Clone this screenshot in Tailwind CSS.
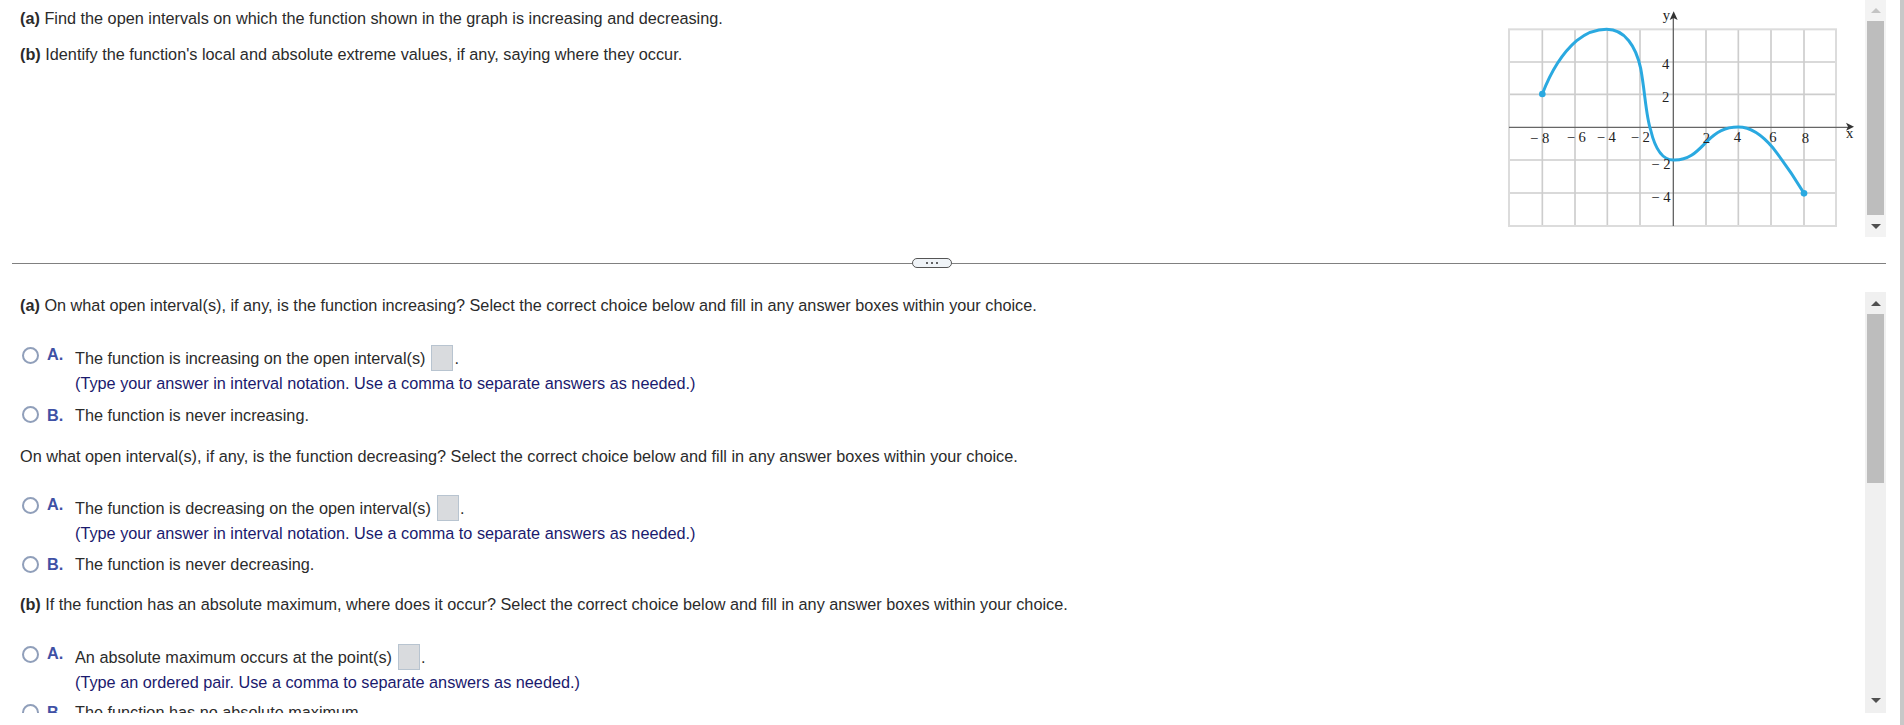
<!DOCTYPE html>
<html lang="en">
  <head>
    <meta charset="UTF-8" />
    <meta name="viewport" content="width=device-width, initial-scale=1.0" />
    <script src="https://cdn.jsdelivr.net/npm/@tailwindcss/browser@4"></script>
    <title>Function intervals</title>
  </head>
  <body class="bg-white h-[725px] overflow-hidden flex font-['Liberation_Sans',Arial,sans-serif] text-[16.25px] leading-[24px] text-[#2b2b2b]">
    <div class="w-[1886px] flex flex-col">
      <!-- question panel -->
      <section class="h-[238px] flex">
        <div class="w-[1490px] pl-5 pt-[6px]">
          <p><b>(a)</b> Find the open intervals on which the function shown in the graph is increasing and decreasing.</p>
          <p class="mt-3"><b>(b)</b> Identify the function's local and absolute extreme values, if any, saying where they occur.</p>
        </div>
        <svg class="w-[375px] h-[238px] shrink-0" viewBox="0 0 1125 714" fill="none">
          <g stroke="#cdcdcd" stroke-width="5">
            <path d="M157 88V678M255 88V678M352 88V678M450 88V678M648 88V678M745 88V678M843 88V678M942 88V678" />
            <path d="M57 186H1038M57 283H1038M57 480H1038M57 579H1038" />
          </g>
          <rect x="57" y="88" width="981" height="590" stroke="#dcdcdc" stroke-width="6" />
          <path d="M57 382H1082M550 678V50" stroke="#666" stroke-width="4" />
          <path d="M1092 380L1068 368L1074 380L1068 392Z" fill="#333" />
          <path d="M551 34L539 60L551 54L563 60Z" fill="#333" />
          <path d="M157 282C175 235 210 165 260 122C290 98 325 88 350 88C405 88 438 140 452 205C465 275 468 350 482 390C495 445 515 480 550 480C600 482 625 450 650 425C680 395 705 381 745 381C790 381 825 415 850 445C885 490 915 535 942 580" stroke="#2aa9e0" stroke-width="9" stroke-linecap="round" />
          <circle cx="157" cy="282" r="10" fill="#2aa9e0" />
          <circle cx="942" cy="580" r="10" fill="#2aa9e0" />
          <g fill="#222" font-family="'Liberation Serif', serif" font-size="44">
            <text x="120" y="430">− 8</text>
            <text x="230" y="426">− 6</text>
            <text x="320" y="426">− 4</text>
            <text x="422" y="426">− 2</text>
            <text x="638" y="430">2</text>
            <text x="731" y="426">4</text>
            <text x="838" y="426">6</text>
            <text x="935" y="430">8</text>
            <text x="516" y="206">4</text>
            <text x="516" y="306">2</text>
            <text x="484" y="506">− 2</text>
            <text x="484" y="606">− 4</text>
            <text x="1068" y="414">x</text>
            <text x="518" y="60">y</text>
          </g>
        </svg>
        <div class="w-[21px] h-[237px] bg-[#f3f3f3] flex flex-col items-center shrink-0">
          <div class="h-[21px] flex items-center justify-center">
            <div class="w-0 h-0 border-x-[5px] border-x-transparent border-b-[5px] border-b-[#c4c4c4]"></div>
          </div>
          <div class="w-[17px] h-[194px] bg-[#bdbdbd]"></div>
          <div class="flex-1 flex items-center justify-center">
            <div class="w-0 h-0 border-x-[5px] border-x-transparent border-t-[5px] border-t-[#505050]"></div>
          </div>
        </div>
      </section>

      <!-- divider -->
      <div class="h-[54px] pl-3 pt-[20px] flex items-start">
        <div class="flex items-center w-full h-[10px]">
          <div class="w-[900px] shrink-0 h-[1px] bg-[#808080]"></div>
          <div class="w-[40px] h-[10px] rounded-full border border-[#555] bg-[#f0f4f8] flex items-center justify-center gap-[3px]">
            <span class="w-[2px] h-[2px] bg-[#333] rounded-full"></span>
            <span class="w-[2px] h-[2px] bg-[#333] rounded-full"></span>
            <span class="w-[2px] h-[2px] bg-[#333] rounded-full"></span>
          </div>
          <div class="flex-1 h-[1px] bg-[#808080]"></div>
        </div>
      </div>

      <!-- answer panel -->
      <section class="h-[421px] flex overflow-hidden">
        <div class="flex-1 pl-5 pt-[1px] overflow-hidden">
          <p><b>(a)</b> On what open interval(s), if any, is the function increasing? Select the correct choice below and fill in any answer boxes within your choice.</p>

          <div class="mt-7 flex h-[26px] items-center">
            <span class="w-[17px] h-[17px] ml-[2px] rounded-full border-2 border-[#909fba] bg-white shrink-0 -mt-[6px]"></span>
            <b class="ml-[8px] w-[28px] text-[#3f51a5] -mt-[8px] shrink-0">A.</b>
            <span>The function is increasing on the open interval(s)</span>
            <span class="ml-[6px] w-[22px] h-[26px] border border-[#b8c4d0] bg-[#d9dbde]"></span>
            <span class="ml-[1px]">.</span>
          </div>
          <p class="pl-[55px] text-[#1a1a6e]">(Type your answer in interval notation. Use a comma to separate answers as needed.)</p>
          <div class="mt-2 flex items-center">
            <span class="w-[17px] h-[17px] ml-[2px] rounded-full border-2 border-[#909fba] bg-white shrink-0 -mt-[2px]"></span>
            <b class="ml-[8px] w-[28px] text-[#3f51a5] shrink-0">B.</b>
            <span>The function is never increasing.</span>
          </div>

          <p class="mt-[17px]">On what open interval(s), if any, is the function decreasing? Select the correct choice below and fill in any answer boxes within your choice.</p>

          <div class="mt-[27px] flex h-[26px] items-center">
            <span class="w-[17px] h-[17px] ml-[2px] rounded-full border-2 border-[#909fba] bg-white shrink-0 -mt-[6px]"></span>
            <b class="ml-[8px] w-[28px] text-[#3f51a5] -mt-[8px] shrink-0">A.</b>
            <span>The function is decreasing on the open interval(s)</span>
            <span class="ml-[6px] w-[22px] h-[26px] border border-[#b8c4d0] bg-[#d9dbde]"></span>
            <span class="ml-[1px]">.</span>
          </div>
          <p class="pl-[55px] text-[#1a1a6e]">(Type your answer in interval notation. Use a comma to separate answers as needed.)</p>
          <div class="mt-[7px] flex items-center">
            <span class="w-[17px] h-[17px] ml-[2px] rounded-full border-2 border-[#909fba] bg-white shrink-0"></span>
            <b class="ml-[8px] w-[28px] text-[#3f51a5] shrink-0">B.</b>
            <span>The function is never decreasing.</span>
          </div>

          <p class="mt-[16px]"><b>(b)</b> If the function has an absolute maximum, where does it occur? Select the correct choice below and fill in any answer boxes within your choice.</p>

          <div class="mt-7 flex h-[26px] items-center">
            <span class="w-[17px] h-[17px] ml-[2px] rounded-full border-2 border-[#909fba] bg-white shrink-0 -mt-[6px]"></span>
            <b class="ml-[8px] w-[28px] text-[#3f51a5] -mt-[8px] shrink-0">A.</b>
            <span>An absolute maximum occurs at the point(s)</span>
            <span class="ml-[6px] w-[22px] h-[26px] border border-[#b8c4d0] bg-[#d9dbde]"></span>
            <span class="ml-[1px]">.</span>
          </div>
          <p class="pl-[55px] text-[#1a1a6e]">(Type an ordered pair. Use a comma to separate answers as needed.)</p>
          <div class="mt-[6px] flex items-center">
            <span class="w-[17px] h-[17px] ml-[2px] rounded-full border-2 border-[#909fba] bg-white shrink-0"></span>
            <b class="ml-[8px] w-[28px] text-[#3f51a5] shrink-0">B.</b>
            <span>The function has no absolute maximum.</span>
          </div>
        </div>
        <div class="w-[21px] h-[421px] bg-[#f0f0f0] flex flex-col items-center shrink-0">
          <div class="h-[22px] flex items-center justify-center">
            <div class="w-0 h-0 border-x-[5px] border-x-transparent border-b-[5px] border-b-[#505050]"></div>
          </div>
          <div class="w-[17px] h-[169px] bg-[#bdbdbd]"></div>
          <div class="flex-1"></div>
          <div class="h-[26px] flex items-center justify-center">
            <div class="w-0 h-0 border-x-[5px] border-x-transparent border-t-[5px] border-t-[#505050]"></div>
          </div>
        </div>
      </section>
    </div>
    <div class="ml-[14px] w-[4px] h-full bg-[#c8c8c8]"></div>
  </body>
</html>
